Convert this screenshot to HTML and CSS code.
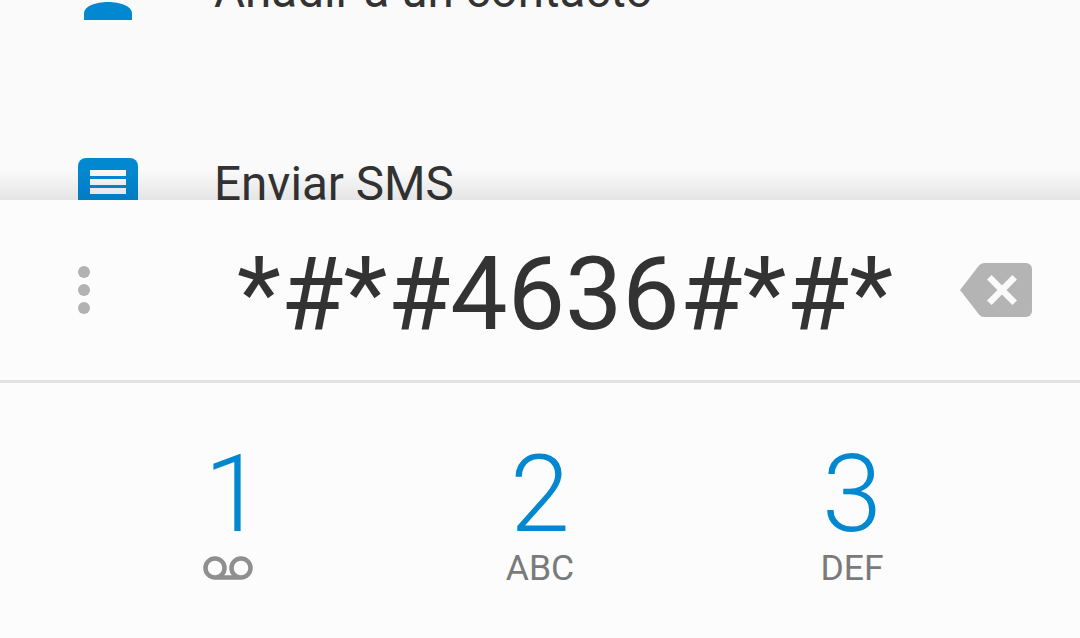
FILE: index.html
```html
<!DOCTYPE html>
<html lang="es">
<head>
<meta charset="utf-8">
<title>Teléfono</title>
<link rel="stylesheet" href="styles.css">
</head>
<body>
<div class="screen">
  <section class="actions">
    <div class="action action-first">
      <div class="action-icon">
        <svg class="person" width="48" height="20" viewBox="0 0 48 20"><path fill="#0288d1" d="M0 20V13.500C0 6 12 2 24 2S48 6 48 13.500V20Z"/></svg>
      </div>
      <span class="action-label">Añadir a un contacto</span>
    </div>
    <div class="action action-second">
      <div class="action-icon">
        <svg width="60" height="42" viewBox="0 0 60 42"><path fill="#0288d1" d="M0 42V8a8 8 0 0 1 8-8H52a8 8 0 0 1 8 8V42Z"/><path fill="#f8f8f8" d="M12 12H48V18H12ZM12 21H48V27H12ZM12 30H48V36H12Z"/></svg>
      </div>
      <span class="action-label">Enviar SMS</span>
    </div>
    <div class="shade"></div>
  </section>
  <section class="entry">
    <div class="dots"><i></i><i></i><i></i></div>
    <div class="digits">*#*#4636#*#*</div>
    <svg class="backspace" width="72" height="54" viewBox="0 0 72 54"><path fill="#b4b4b4" d="M0 27 19 2.500Q21 0 24 0H66a6 6 0 0 1 6 6V48a6 6 0 0 1-6 6H24Q21 54 19 51.500Z"/><path stroke="#fafafa" stroke-width="6.500" fill="none" d="M29.300 14.300 54.700 39.700M54.700 14.300 29.300 39.700"/></svg>
  </section>
  <section class="keypad">
    <div class="key">
      <span class="key-num key-num-one">1</span>
      <svg class="voicemail" width="50" height="24" viewBox="0 0 50 24"><path fill="none" stroke="#8f8f8f" stroke-width="4.500" d="M12 21.500H38M12 21.500a9.500 9.500 0 1 1 0-19 9.500 9.500 0 0 1 0 19ZM38 21.500a9.500 9.500 0 1 1 0-19 9.500 9.500 0 0 1 0 19Z"/></svg>
    </div>
    <div class="key">
      <span class="key-num">2</span>
      <span class="key-sub">ABC</span>
    </div>
    <div class="key">
      <span class="key-num">3</span>
      <span class="key-sub">DEF</span>
    </div>
  </section>
</div>
</body>
</html>
```
FILE: styles.css
```css
html, body {
  margin: 0;
  padding: 0;
  height: 100%;
}
body {
  background: #fcfcfc;
  font-family: Roboto, "Liberation Sans", sans-serif;
  overflow: hidden;
}
.screen {
  width: 1080px;
  height: 638px;
  display: flex;
  flex-direction: column;
  overflow: hidden;
}
.actions {
  position: relative;
  height: 200px;
  flex: none;
  background: #fafafa;
  overflow: hidden;
}
.action {
  display: flex;
  align-items: flex-start;
  padding-left: 78px;
}
.action-first {
  height: 186px;
  margin-top: -28px;
}
.action-icon {
  width: 136px;
  flex: none;
}
.action-first .action-icon {
  padding: 28px 0 0 6px;
  width: 130px;
}
.action-label {
  font-size: 47.6px;
  line-height: 54px;
  color: #333;
}
.action-second .action-label {
  margin-top: -1px;
}
.action-first .action-label {
  margin-top: -8px;
}
.shade {
  position: absolute;
  left: 0;
  right: 0;
  bottom: 0;
  height: 30px;
  background: linear-gradient(rgba(0,0,0,0), rgba(0,0,0,.085));
}
.entry {
  height: 180px;
  flex: none;
  display: flex;
  align-items: center;
  background: #fcfcfc;
  border-bottom: 3px solid #e2e2e2;
  padding-left: 78px;
  padding-right: 48px;
  box-sizing: content-box;
  width: 954px;
}
.dots {
  width: 12px;
  display: flex;
  flex-direction: column;
  gap: 6px;
  flex: none;
}
.dots i {
  width: 12px;
  height: 12px;
  border-radius: 50%;
  background: #b2b2b2;
}
.digits {
  flex: 1;
  text-align: center;
  font-size: 102px;
  line-height: 112px;
  padding-left: 80px;
  padding-top: 8px;
  color: #333;
  white-space: nowrap;
}
.backspace {
  flex: none;
}
.keypad {
  display: flex;
  justify-content: flex-start;
  padding-left: 72px;
}
.key {
  width: 312px;
  display: flex;
  flex-direction: column;
  align-items: center;
  padding-top: 55px;
}
.key-num {
  font-weight: 300;
  font-size: 108px;
  line-height: 112px;
  color: #0288d1;
}
.key-num-one {
  padding-left: 12px;
}
.key-sub {
  font-size: 35.5px;
  line-height: 40px;
  color: #7a7a7a;
  margin-top: -2px;
}
.voicemail {
  margin-top: 6px;
}
```
